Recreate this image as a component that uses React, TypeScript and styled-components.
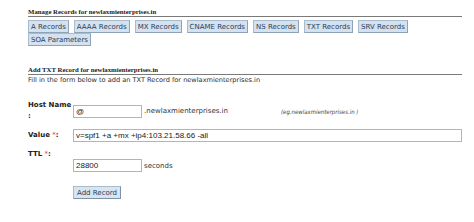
import styled, {createGlobalStyle} from "styled-components";

const GlobalStyle = createGlobalStyle`
  body {
    margin: 0;
    background: #ffffff;
    font-family: "DejaVu Sans", Verdana, sans-serif;
    color: #222222;
  }
`;

const recordTypes = ["A", "AAAA", "MX", "CNAME", "NS", "TXT", "SRV"];

export default function App() {
    return (
        <Page>
            <GlobalStyle />
            <SectionTitle>Manage Records for newlaxmienterprises.in</SectionTitle>
            <ButtonBar>
                {recordTypes.map((type) => (
                    <TabButton key={type}>{type} Records</TabButton>
                ))}
                <TabButton>SOA Parameters</TabButton>
            </ButtonBar>

            <SectionTitle $top={21}>Add TXT Record for newlaxmienterprises.in</SectionTitle>
            <Intro>Fill in the form below to add an TXT Record for newlaxmienterprises.in</Intro>

            <FormGrid>
                <Label>Host Name<br />:</Label>
                <Field>
                    <TextInput $width={69} defaultValue="@" />
                    <Suffix>.newlaxmienterprises.in</Suffix>
                    <Example>(eg.newlaxmienterprises.in )</Example>
                </Field>

                <Label>Value <Required>*</Required>:</Label>
                <Field>
                    <TextInput $width={389} defaultValue="v=spf1 +a +mx +ip4:103.21.58.66 -all" />
                </Field>

                <Label $top>TTL <Required>*</Required>:</Label>
                <Field $offset={10}>
                    <TextInput $width={69} defaultValue="28800" />
                    <Suffix>seconds</Suffix>
                </Field>

                <span />
                <Field $offset={7}>
                    <SubmitButton>Add Record</SubmitButton>
                </Field>
            </FormGrid>
        </Page>
    );
}

const Page = styled.div`
  width: 434px;
  padding: 9px 0 0 28px;
`;

const SectionTitle = styled.div<{ $top?: number }>`
  margin-top: ${(p) => p.$top ?? 0}px;
  font-family: "Liberation Serif", "Times New Roman", serif;
  font-weight: bold;
  font-size: 6.8px;
  line-height: 6px;
  color: #1a1a1a;
  border-bottom: 1px solid #7a7a7a;
  padding-bottom: 1px;
`;

const ButtonBar = styled.div`
  display: flex;
  flex-wrap: wrap;
  column-gap: 5px;
  row-gap: 0;
  margin-top: 3px;
  padding-right: 50px;
`;

const TabButton = styled.button`
  height: 13px;
  padding: 0 2px;
  font-family: "DejaVu Sans", Tahoma, sans-serif;
  font-size: 7px;
  color: #2b3d57;
  background: #d4e2ef;
  border: 1px solid #a9bccd;
  border-right-color: #8ea3b8;
  border-bottom-color: #8ea3b8;
  cursor: pointer;
`;

const Intro = styled.div`
  font-size: 6.6px;
  line-height: 9px;
  color: #2a2a2a;
  margin-top: 1px;
`;

const FormGrid = styled.div`
  display: grid;
  grid-template-columns: 45px 1fr;
  align-items: center;
  row-gap: 7px;
  margin-top: 15px;
`;

const Label = styled.div<{ $top?: boolean }>`
  align-self: ${(p) => (p.$top ? "start" : "center")};
  font-weight: bold;
  font-size: 7px;
  line-height: 11px;
  color: #222222;
`;

const Required = styled.span`
  color: #e03a3a;
  font-weight: normal;
`;

const Field = styled.div<{ $offset?: number }>`
  display: flex;
  align-items: center;
  padding-top: ${(p) => p.$offset ?? 0}px;
`;

const TextInput = styled.input<{ $width: number }>`
  box-sizing: border-box;
  width: ${(p) => p.$width}px;
  height: 13px;
  padding: 0 2px;
  font-family: "Liberation Sans", Arial, sans-serif;
  font-size: 8px;
  color: #222222;
  border: 1px solid #b4b4b4;
  outline: none;
`;

const Suffix = styled.span`
  font-size: 7px;
  color: #333333;
  margin-left: 2px;
`;

const Example = styled.span`
  font-family: "DejaVu Sans Condensed", "DejaVu Sans", sans-serif;
  font-size: 6px;
  font-style: italic;
  color: #444444;
  margin-left: 53px;
`;

const SubmitButton = styled.button`
  height: 13px;
  padding: 0 3px;
  font-family: "DejaVu Sans", Tahoma, sans-serif;
  font-size: 7px;
  color: #2b3d57;
  background: #d8e5f1;
  border: 1px solid #a9bccd;
  border-right-color: #7f93a8;
  border-bottom-color: #7f93a8;
`;
